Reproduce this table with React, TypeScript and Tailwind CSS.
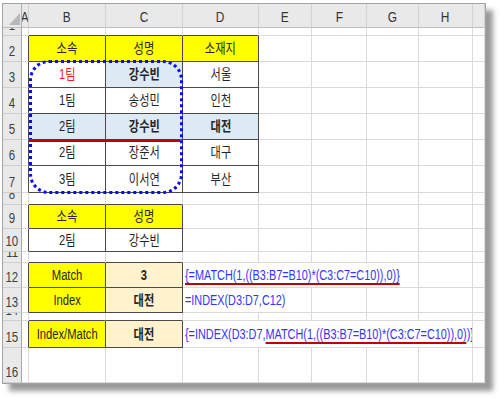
import type { ReactNode } from "react"

type CellDef = {
  t?: ReactNode
  bg?: string
  bold?: boolean
  color?: string
  formula?: boolean
  span?: number
}

const COL_LETTERS = ["", "A", "B", "C", "D", "E", "F", "G", "H", ""]
const ROW_COUNT = 16

const YELLOW = "bg-[#ffff00]"
const BLUE = "bg-[#dde9f5]"
const PEACH = "bg-[#fff2cc]"

const formulaCls = "text-[#3434ff]"

const cells: Record<string, CellDef> = {
  B2: { t: "소속", bg: YELLOW },
  C2: { t: "성명", bg: YELLOW },
  D2: { t: "소재지", bg: YELLOW },
  B3: { t: "1팀", color: "text-[#ff1a1a]" },
  C3: { t: "강수빈", bold: true, bg: BLUE },
  D3: { t: "서울" },
  B4: { t: "1팀" },
  C4: { t: "송성민" },
  D4: { t: "인천" },
  B5: { t: "2팀", bg: BLUE },
  C5: { t: "강수빈", bold: true, bg: BLUE },
  D5: { t: "대전", bold: true, bg: BLUE },
  B6: { t: "2팀" },
  C6: { t: "장준서" },
  D6: { t: "대구" },
  B7: { t: "3팀" },
  C7: { t: "이서연" },
  D7: { t: "부산" },
  B9: { t: "소속", bg: YELLOW },
  C9: { t: "성명", bg: YELLOW },
  B10: { t: "2팀" },
  C10: { t: "강수빈" },
  B12: { t: "Match", bg: YELLOW },
  C12: { t: "3", bold: true, bg: PEACH },
  B13: { t: "Index", bg: YELLOW },
  C13: { t: "대전", bold: true, bg: PEACH },
  B15: { t: "Index/Match", bg: YELLOW },
  C15: { t: "대전", bold: true, bg: PEACH },
  // formulas spill over the empty cells to their right
  D12: {
    formula: true,
    span: 4,
    t: (
      <span className="border-b-2 border-[#c00000]">
        {"{=MATCH(1,((B3:B7=B10)*(C3:C7=C10)),0)}"}
      </span>
    ),
  },
  D13: { formula: true, span: 2, t: "=INDEX(D3:D7,C12)" },
  D15: {
    formula: true,
    span: 5,
    t: (
      <>
        {"{=INDEX(D3:D7,"}
        <span className="border-b-2 border-[#c00000]">
          {"MATCH(1,((B3:B7=B10)*(C3:C7=C10)),0)"}
        </span>
        {")}"}
      </>
    ),
  },
}

// B..D = 2..4
const tables = [
  { r1: 2, r2: 7, c1: 2, c2: 4 },
  { r1: 9, r2: 10, c1: 2, c2: 3 },
  { r1: 12, r2: 13, c1: 2, c2: 3 },
  { r1: 15, r2: 15, c1: 2, c2: 3 },
]

const inTable = (r: number, c: number) =>
  tables.some((t) => r >= t.r1 && r <= t.r2 && c >= t.c1 && c <= t.c2)

const spanCls: Record<number, string> = {
  1: "",
  2: "col-span-2",
  4: "col-span-4",
  5: "col-span-5",
}

const Corner = () => (
  <div className="border-r border-b border-r-[#b0b0b0] border-b-[#bdbdbd] bg-[#e9e9e9]">
    <svg width="19" height="24" viewBox="0 0 19 24">
      <polygon points="17,9 17,21 6,21" fill="#b8b8b8" />
    </svg>
  </div>
)

const RowHead = ({ n }: { n: number }) => (
  <div className="flex items-end justify-center overflow-hidden border-r border-b border-r-[#a9a9a9] border-b-[#cfcfcf] bg-[#e9e9e9] pb-[2px]">
    <span className="inline-block scale-x-[0.82] text-[14px] leading-[16px] text-[#404040]">
      {n}
    </span>
  </div>
)

const Cell = ({ r, c }: { r: number; c: number }) => {
  const key = `${COL_LETTERS[c]}${r}`
  const d = cells[key] ?? {}
  const span = d.span ?? 1
  const lastC = c + span - 1
  const darkR = inTable(r, lastC) || inTable(r, lastC + 1)
  const darkB = inTable(r, c) || inTable(r + 1, c)
  return (
    <div
      className={`relative flex items-center overflow-hidden border-r border-b ${
        darkR ? "border-r-[#4a4a4a]" : "border-r-[#dadada]"
      } ${darkB ? "border-b-[#4a4a4a]" : "border-b-[#dadada]"} ${
        d.bg ?? "bg-white"
      } ${d.formula ? "justify-start pl-[2px]" : "justify-center"} ${spanCls[span] ?? ""}`}
    >
      {d.t !== undefined && (
        <span
          className={`inline-block whitespace-nowrap text-[14px] leading-[17px] ${
            d.formula
              ? `origin-left scale-x-[0.775] ${formulaCls}`
              : "scale-x-[0.8]"
          } ${d.bold ? "font-bold" : ""} ${d.color ?? (d.formula ? "" : "text-[#262626]")}`}
        >
          {d.t}
        </span>
      )}
    </div>
  )
}

export default function App() {
  const body: ReactNode[] = []
  for (let r = 1; r <= ROW_COUNT; r++) {
    body.push(<RowHead key={`h${r}`} n={r} />)
    for (let c = 1; c < COL_LETTERS.length; c++) {
      const key = `${COL_LETTERS[c]}${r}`
      body.push(<Cell key={key + c} r={r} c={c} />)
      const span = cells[key]?.span ?? 1
      c += span - 1
    }
  }

  return (
    <div className="h-[398px] w-[500px] overflow-hidden bg-white font-['Liberation_Sans','Noto_Sans_CJK_KR',sans-serif]">
      <div className="relative ml-[2px] mt-[3px] inline-block border border-[#a3a3a3] shadow-[7px_7px_5px_rgba(0,0,0,0.4)]">
        <div className="grid grid-cols-[19px_7px_77px_77px_76px_53px_55px_52px_54px_12px] grid-rows-[24px_8px_26px_26px_26px_26px_26px_27px_12px_24px_23px_11px_25px_25px_8px_27px_35px]">
          <Corner />
          {COL_LETTERS.slice(1).map((l, i) => (
            <div
              key={`c${i}`}
              className="flex items-center justify-center overflow-hidden border-r border-b border-r-[#d2d2d2] border-b-[#bdbdbd] bg-[#e9e9e9] pt-[2px]"
            >
              <span className="inline-block scale-x-[0.85] text-[14px] leading-[16px] text-[#333]">
                {l}
              </span>
            </div>
          ))}
          {body}
        </div>

        {/* dotted selection outline around B3:C7 */}
        <div className="pointer-events-none absolute left-[26px] top-[56px] h-[134px] w-[154px] rounded-[20px] border-[3px] border-dotted border-[#0a0aff]" />
        {/* red underline below row 5 */}
        <div className="pointer-events-none absolute left-[26px] top-[135px] h-[3px] w-[151px] bg-[#c00000]" />
      </div>
    </div>
  )
}
